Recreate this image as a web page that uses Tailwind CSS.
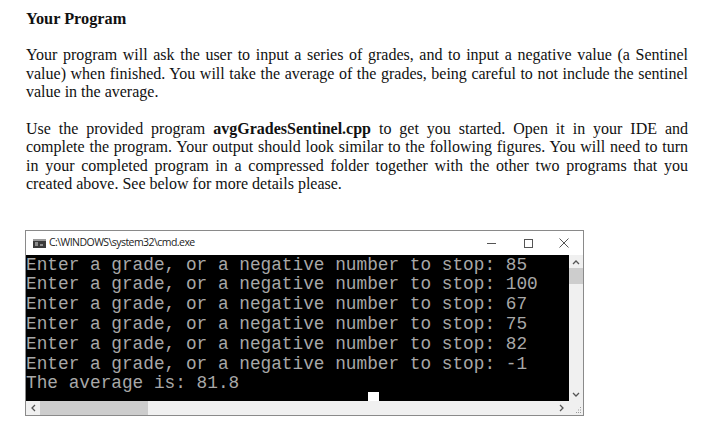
<!DOCTYPE html>
<html><head><script src="https://cdn.jsdelivr.net/npm/@tailwindcss/browser@4"></script></head>
<body class="bg-white w-[719px] h-[436px] overflow-hidden">
<div class="pl-[26px] pr-[31px] pt-[10px] font-['Liberation_Serif',serif] text-[16px] leading-[18.3px] text-[#111]">
<h1 class="font-bold text-[16.3px]">Your Program</h1>
<p class="mt-[18px] text-justify">Your program will ask the user to input a series of grades, and to input a negative value (a Sentinel value) when finished. You will take the average of the grades, being careful to not include the sentinel value in the average.</p>
<p class="mt-[19px] text-justify">Use the provided program <b>avgGradesSentinel.cpp</b> to get you started. Open it in your IDE and complete the program. Your output should look similar to the following figures. You will need to turn in your completed program in a compressed folder together with the other two programs that you created above. See below for more details please.</p>
</div>
<div class="absolute left-[25px] top-[230px] w-[559px] h-[186px] border border-[#8a8a8a] flex flex-col font-['Liberation_Mono',monospace]">
<div class="h-[24px] flex items-center pl-[7px] shrink-0 bg-white">
<svg width="13" height="9" viewBox="0 0 13 9" class="shrink-0"><rect width="13" height="9" fill="#3a3a3a"/><rect y="0" width="13" height="2" fill="#9a9a9a"/><path d="M2 4h3M2 6h3M7 6h3" stroke="#ddd" stroke-width="1"/></svg>
<span class="ml-[3px] font-['Open_Sans',sans-serif] text-[10.5px] tracking-[-0.55px] text-[#222]">C:\WINDOWS\system32\cmd.exe</span>
<div class="ml-auto flex items-center text-[#444]">
<svg width="10" height="10" viewBox="0 0 10 10" class="mr-[26px]"><path d="M0 5.5h9" stroke="#555"/></svg>
<svg width="10" height="10" viewBox="0 0 10 10" class="mr-[26px]"><rect x="1.5" y="1.5" width="8" height="8" fill="none" stroke="#555"/></svg>
<svg width="10" height="10" viewBox="0 0 10 10" class="mr-[14px]"><path d="M.5.5l9 9M9.5.5l-9 9" stroke="#555"/></svg>
</div>
</div>
<div class="flex flex-1 min-h-0">
<div class="relative flex-1 bg-black text-[#a8a8a8] text-[17.77px] leading-[19.8px] pt-[0.6px] overflow-hidden">
<div class="whitespace-pre">Enter a grade, or a negative number to stop: 85</div>
<div class="whitespace-pre">Enter a grade, or a negative number to stop: 100</div>
<div class="whitespace-pre">Enter a grade, or a negative number to stop: 67</div>
<div class="whitespace-pre">Enter a grade, or a negative number to stop: 75</div>
<div class="whitespace-pre">Enter a grade, or a negative number to stop: 82</div>
<div class="whitespace-pre">Enter a grade, or a negative number to stop: -1</div>
<div class="whitespace-pre">The average is: 81.8</div>
<div class="absolute left-[342px] bottom-0 w-[11px] h-[9px] bg-white"></div>
</div>
<div class="w-[14px] bg-[#f0f0f0] flex flex-col shrink-0">
<div class="h-[13px] flex items-center justify-center"><svg width="8" height="6" viewBox="0 0 8 6"><path d="M1 5l3-3 3 3" fill="none" stroke="#555" stroke-width="1.3"/></svg></div>
<div class="h-[16px] bg-[#cdcdcd]"></div>
<div class="mt-auto h-[13px] flex items-center justify-center"><svg width="8" height="6" viewBox="0 0 8 6"><path d="M1 1l3 3 3-3" fill="none" stroke="#555" stroke-width="1.3"/></svg></div>
</div>
</div>
<div class="h-[14px] bg-[#f0f0f0] flex items-center shrink-0">
<div class="w-[14px] flex justify-center"><svg width="6" height="8" viewBox="0 0 6 8"><path d="M5 1L2 4l3 3" fill="none" stroke="#555" stroke-width="1.3"/></svg></div>
<div class="w-[108px] h-full bg-[#cdcdcd]"></div>
<div class="ml-auto w-[14px] flex justify-center"><svg width="6" height="8" viewBox="0 0 6 8"><path d="M1 1l3 3-3 3" fill="none" stroke="#555" stroke-width="1.3"/></svg></div>
<div class="w-[14px] h-full flex items-end justify-end"><svg width="8" height="8" viewBox="0 0 8 8" class="mb-[1px] mr-[1px]"><path d="M6 1h1v1H6zM4 3.500h1v1H4zM6 3.500h1v1H6zM2 6h1v1H2zM4 6h1v1H4zM6 6h1v1H6z" fill="#999"/></svg></div>
</div>
</div>
</body></html>
